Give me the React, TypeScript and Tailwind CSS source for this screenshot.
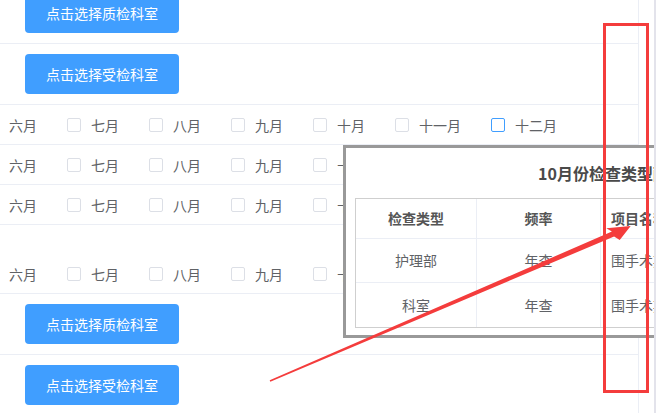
import React from 'react';

const months = ['六月', '七月', '八月', '九月', '十月', '十一月', '十二月'];

const PickButton: React.FC<{ label: string }> = ({ label }) => (
    <button className="w-[154px] h-[40px] rounded-[4px] bg-[#409eff] text-white text-[14px]">
        {label}
    </button>
);

const ButtonRow: React.FC<{ label: string; className?: string }> = ({ label, className = '' }) => (
    <div className={`h-[61px] border-b border-[#ebeef5] pl-[25px] pt-[10px] ${className}`}>
        <PickButton label={label} />
    </div>
);

const MonthRow: React.FC<{ tall?: boolean }> = ({ tall }) => (
    <div
        className={`border-b border-[#ebeef5] flex ${tall ? 'h-[69px] items-end pb-[9px]' : 'h-[40px] items-center'}`}
    >
        <div className="flex items-center -ml-[15px] whitespace-nowrap">
            {months.map((m) => (
                <label key={m} className="flex items-center mr-[30px] leading-[20px]">
                    <span
                        className={`w-[14px] h-[14px] rounded-[2px] border bg-white ${
                            m === '十二月' ? 'border-[#409eff]' : 'border-[#dcdfe6]'
                        }`}
                    />
                    <span className="pl-[10px] text-[14px] text-[#606266]">{m}</span>
                </label>
            ))}
        </div>
    </div>
);

const TypePopup: React.FC = () => (
    <div className="absolute left-[343px] top-[145px] w-[420px] h-[193px] border-[3px] border-[#999] bg-white">
        <div className="h-[50px] flex items-center pl-[192px] text-[16px] font-bold text-[#4a4a4a] whitespace-nowrap">
            10月份检查类型配置
        </div>
        <div className="ml-[9px] border border-[#cfcfcf] border-r-0">
            <div className="flex h-[40px] border-b border-[#ebeef5] text-[14px] font-bold text-[#555]">
                <div className="w-[121px] flex items-center justify-center border-r border-[#ebeef5]">检查类型</div>
                <div className="w-[124px] flex items-center justify-center border-r border-[#ebeef5]">频率</div>
                <div className="flex-1 flex items-center pl-[10px] whitespace-nowrap">项目名称</div>
            </div>
            {['护理部', '科室'].map((t, i) => (
                <div
                    key={t}
                    className={`flex h-[44px] text-[14px] text-[#606266] ${i === 0 ? 'border-b border-[#ebeef5]' : ''}`}
                >
                    <div className="w-[121px] flex items-center justify-center border-r border-[#ebeef5]">{t}</div>
                    <div className="w-[124px] flex items-center justify-center border-r border-[#ebeef5]">年查</div>
                    <div className="flex-1 flex items-center pl-[10px] whitespace-nowrap">围手术期管理</div>
                </div>
            ))}
        </div>
    </div>
);

const App: React.FC = () => {
    return (
        <div
            className="w-[666px] h-[413px] flex overflow-hidden bg-white relative"
            style={{ fontFamily: '"Noto Sans CJK SC", "Noto Sans", sans-serif' }}
        >
            <div className="w-[654px] h-full relative overflow-hidden">
                {/* table rows */}
                <div className="w-[639px] border-r border-[#ebeef5] -mt-[17px] h-[440px]">
                    <ButtonRow label="点击选择质检科室" />
                    <ButtonRow label="点击选择受检科室" />
                    <MonthRow />
                    <MonthRow />
                    <MonthRow />
                    <MonthRow tall />
                    <ButtonRow label="点击选择质检科室" />
                    <ButtonRow label="点击选择受检科室" />
                </div>

                <TypePopup />
            </div>
            <div className="w-[2px] h-full bg-[#e3e3eb]" />
            <div className="flex-1 h-full bg-white" />

            {/* annotation: red box + arrow */}
            <div className="absolute left-[603px] top-[23px] w-[46px] h-[370px] border-[3px] border-[#f43c3c]" />
            <svg className="absolute inset-0 pointer-events-none" width={666} height={413} viewBox="0 0 666 413">
                <polygon
                    fill="#f43c3c"
                    points="269.7,380.3 611.9,231.5 606.3,228.3 630.7,226 619.7,240 614.1,236.5 270.3,381.7"
                />
            </svg>
        </div>
    );
};

export default App;
